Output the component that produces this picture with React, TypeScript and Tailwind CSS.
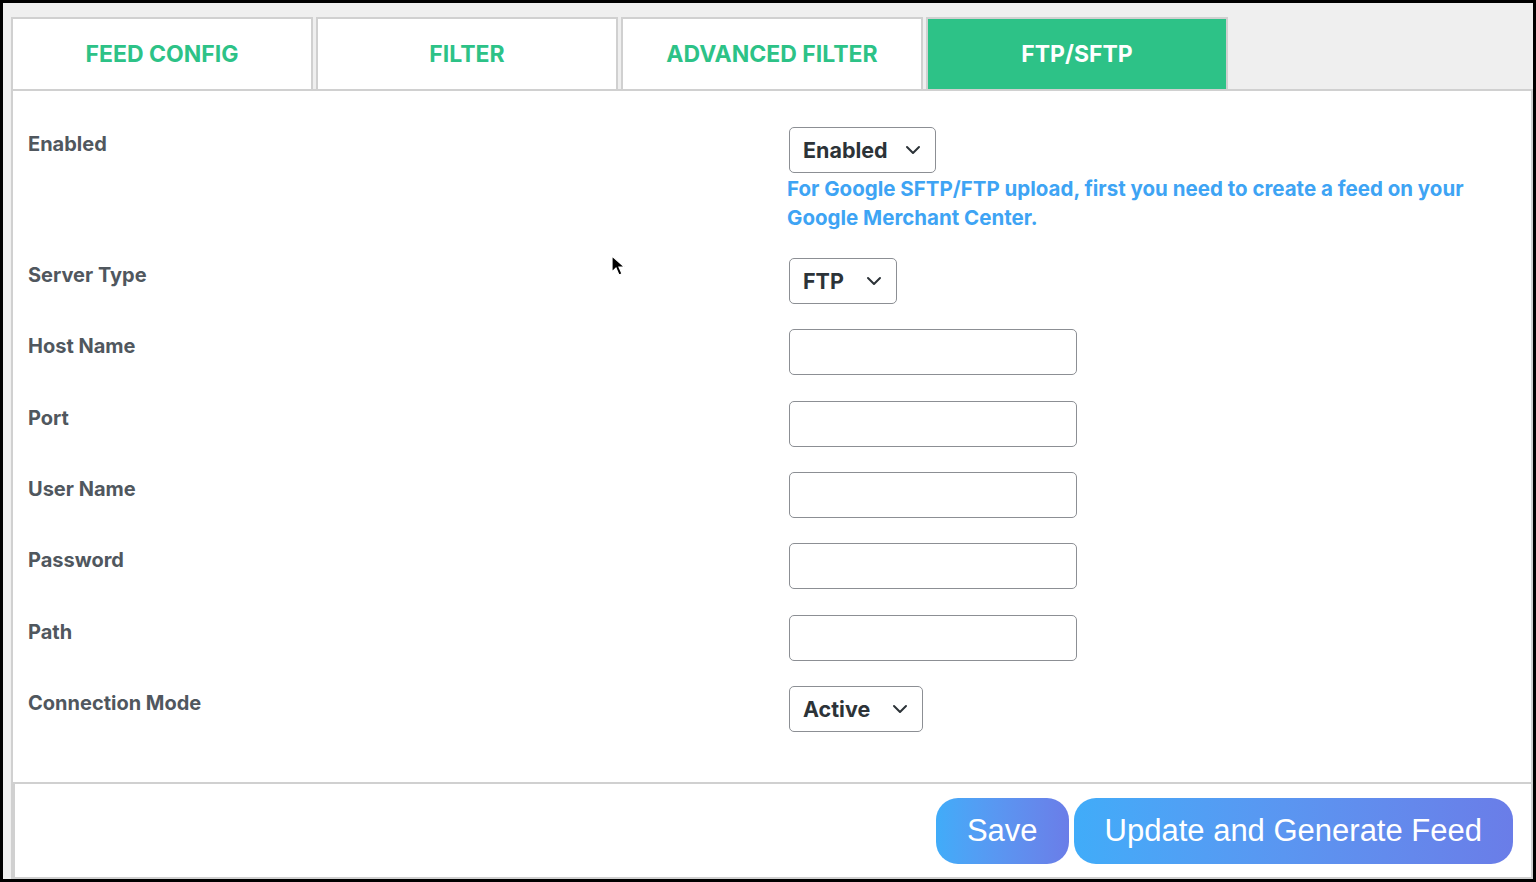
import React from 'react';

const tabs = ['FEED CONFIG', 'FILTER', 'ADVANCED FILTER', 'FTP/SFTP'];

const Chevron = () => (
  <svg width="16" height="10" viewBox="0 0 16 10" fill="none" className="shrink-0">
    <path d="M2 2l6 6 6-6" stroke="#2c3338" strokeWidth="2" strokeLinecap="round" strokeLinejoin="round" />
  </svg>
);

const Select = ({ value, width }: { value: string; width: string }) => (
  <div
    className={`flex h-[46px] items-center justify-between rounded-[5px] border border-[#8c8f94] bg-white pl-[13px] pr-[14px] text-[21.5px] font-bold text-[#2c3338] ${width}`}
  >
    <span>{value}</span>
    <Chevron />
  </div>
);

const Input = () => (
  <div className="h-[46px] w-[288px] rounded-[5px] border border-[#8c8f94] bg-white" />
);

// 폼 행 목록
const rows: { label: string; field: React.ReactNode }[] = [
  { label: 'Server Type', field: <Select value="FTP" width="w-[108px]" /> },
  { label: 'Host Name', field: <Input /> },
  { label: 'Port', field: <Input /> },
  { label: 'User Name', field: <Input /> },
  { label: 'Password', field: <Input /> },
  { label: 'Path', field: <Input /> },
  { label: 'Connection Mode', field: <Select value="Active" width="w-[134px]" /> },
];

const App = () => {
  return (
    <div
      className="relative flex h-[882px] w-[1536px] flex-col overflow-hidden border-[3px] border-black bg-[#efefef] pl-[8px] pt-[14px]"
      style={{ fontFamily: 'Inter, "Noto Sans", sans-serif' }}
    >
      {/* 탭 */}
      <div className="flex h-[72px] gap-[3px]">
        {tabs.map((tab, i) => {
          const active = i === 3;
          return (
            <div
              key={tab}
              className={`flex w-[302px] items-center justify-center border-2 border-b-0 border-[#d0d0d0] text-[23px] font-bold ${
                active ? 'bg-[#2dc287] text-white' : 'bg-white text-[#2dc287]'
              }`}
            >
              {tab}
            </div>
          );
        })}
      </div>

      {/* 본문 */}
      <div className="flex-1 border-l-2 border-t-2 border-r-2 border-[#d0d0d0] bg-white pt-[36px]">
        <div className="flex">
          <div className="w-1/2 pl-[15px] pr-4 text-[20px] font-bold leading-[34px] text-[#50575e]">
            Enabled
          </div>
          <div className="w-1/2 pl-[17px]">
            <Select value="Enabled" width="w-[147px]" />
            <p className="-ml-[2px] mt-[1px] text-[20.5px] font-bold leading-[29px] text-[#3ea4f4]">
              For Google SFTP/FTP upload, first you need to create a feed on your
              <br />
              Google Merchant Center.
            </p>
          </div>
        </div>
        <div className="pt-[14px]">
          {rows.map((row) => (
            <div key={row.label} className="flex h-[71.33px] pt-[12px]">
              <div className="w-1/2 pl-[15px] pr-4 text-[20px] font-bold leading-[34px] text-[#50575e]">
                {row.label}
              </div>
              <div className="w-1/2 pl-[17px]">{row.field}</div>
            </div>
          ))}
        </div>
      </div>

      {/* 하단 버튼 */}
      <div className="flex h-[97px] justify-end gap-[5px] border-b-2 border-l-4 border-r-2 border-t-2 border-[#d0d0d0] bg-white pb-[13px] pr-[18px] pt-[14px]">
        {['Save', 'Update and Generate Feed'].map((label) => (
          <button
            key={label}
            className="h-[66px] rounded-[22px] bg-gradient-to-r from-[#40acf9] to-[#6a7de8] px-[31px] text-[31px] text-white"
            style={{ fontFamily: '"Liberation Sans", Arial, sans-serif' }}
          >
            {label}
          </button>
        ))}
      </div>

      {/* 마우스 커서 */}
      <svg className="absolute left-[608px] top-[252px]" width="14" height="22" viewBox="0 0 14 22">
        <path d="M1 1v16l4-4 3 7 3-1.3-3-6.7h5.5z" fill="#000" stroke="#fff" strokeWidth="1.2" />
      </svg>
    </div>
  );
};

export default App;
